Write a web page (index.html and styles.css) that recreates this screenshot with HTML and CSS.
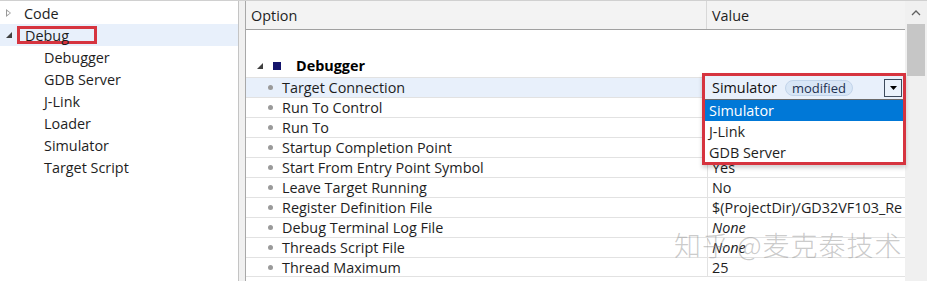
FILE: index.html
```html
<!DOCTYPE html>
<html lang="en">
<head>
<meta charset="utf-8">
<title>Options</title>
<link rel="stylesheet" href="styles.css">
</head>
<body>
<div class="app">
  <div class="tree">
    <div class="node"><span class="tw closed"></span><span class="lbl">Code</span></div>
    <div class="node sel"><span class="tw open"></span><span class="lbl mark">Debug</span></div>
    <div class="node child">Debugger</div>
    <div class="node child">GDB Server</div>
    <div class="node child">J-Link</div>
    <div class="node child">Loader</div>
    <div class="node child">Simulator</div>
    <div class="node child">Target Script</div>
  </div>
  <div class="splitter"></div>
  <div class="props">
    <div class="grid">
      <div class="hdr">
        <div class="hc opt">Option</div>
        <div class="hc val">Value</div>
      </div>
      <div class="body">
        <div class="cat"><span class="tw open dark"></span><span class="sq"></span><span class="cat-lbl">Debugger</span></div>
        <div class="row sel"><div class="c opt"><span class="dot"></span>Target Connection</div><div class="c val"></div></div>
        <div class="row"><div class="c opt"><span class="dot"></span>Run To Control</div><div class="c val"></div></div>
        <div class="row"><div class="c opt"><span class="dot"></span>Run To</div><div class="c val"></div></div>
        <div class="row"><div class="c opt"><span class="dot"></span>Startup Completion Point</div><div class="c val"></div></div>
        <div class="row"><div class="c opt"><span class="dot"></span>Start From Entry Point Symbol</div><div class="c val">Yes</div></div>
        <div class="row"><div class="c opt"><span class="dot"></span>Leave Target Running</div><div class="c val">No</div></div>
        <div class="row"><div class="c opt"><span class="dot"></span>Register Definition File</div><div class="c val">$(ProjectDir)/GD32VF103_Re</div></div>
        <div class="row"><div class="c opt"><span class="dot"></span>Debug Terminal Log File</div><div class="c val"><em>None</em></div></div>
        <div class="row"><div class="c opt"><span class="dot"></span>Threads Script File</div><div class="c val"><em>None</em></div></div>
        <div class="row"><div class="c opt"><span class="dot"></span>Thread Maximum</div><div class="c val">25</div></div>
      </div>
    </div>
    <div class="vscroll">
      <div class="arrow"><svg width="10" height="6" viewBox="0 0 10 6"><path d="M1 5 L5 1 L9 5" fill="none" stroke="#606060" stroke-width="1.3"/></svg></div>
      <div class="thumb"></div>
    </div>
    <div class="combo-pop">
      <div class="combo">
        <span class="combo-val">Simulator</span><span class="badge">modified</span>
        <span class="drop"><svg width="7" height="4" viewBox="0 0 7 4"><path d="M0 0 H7 L3.5 4 Z" fill="#000"/></svg></span>
      </div>
      <div class="list">
        <div class="item on">Simulator</div>
        <div class="item">J-Link</div>
        <div class="item">GDB Server</div>
      </div>
    </div>
    <div class="watermark">知乎 @麦克泰技术</div>
  </div>
</div>
</body>
</html>
```
FILE: styles.css
```css
* { box-sizing: border-box; }
html, body { margin: 0; padding: 0; }
body {
  width: 927px;
  height: 281px;
  overflow: hidden;
  background: #ffffff;
  font-family: "Open Sans", "Noto Sans", sans-serif;
  font-size: 14.4px;
  color: #1e1e1e;
}
.app {
  display: flex;
  height: 281px;
  border-top: 1px solid #d0d0d0;
}
.tree {
  width: 239px;
  flex: none;
  border-right: 1px solid #c4c4c4;
  padding-top: 1px;
  background: #fff;
}
.node {
  height: 22px;
  display: flex;
  align-items: center;
  padding-left: 5px;
  white-space: nowrap;
}
.node.sel { background: #e8f0fb; }
.node.child { padding-left: 44px; }
.tw { width: 8px; height: 8px; flex: none; display: inline-block; position: relative; }
.tw.closed::before {
  content: ""; position: absolute; left: 1px; top: 0;
  border-left: 5px solid #9a9a9a; border-top: 4px solid transparent; border-bottom: 4px solid transparent;
}
.tw.closed::after {
  content: ""; position: absolute; left: 2px; top: 2px;
  border-left: 3px solid #fff; border-top: 2px solid transparent; border-bottom: 2px solid transparent;
}
.tw.open::before {
  content: ""; position: absolute; left: 1px; top: 1px;
  border-bottom: 6px solid #404040; border-left: 6px solid transparent;
}
.lbl { margin-left: 11px; }
.lbl.mark {
  margin-left: 4px;
  width: 80px;
  height: 18px;
  border: 3px solid #d6343f;
  padding-left: 5px;
  line-height: 13px;
}
.splitter {
  width: 7px;
  flex: none;
  background: #f0f0f0;
  border-right: 1px solid #a8a8a8;
}
.props {
  flex: 1;
  display: flex;
  position: relative;
  background: #fff;
}
.grid { flex: 1; display: flex; flex-direction: column; min-width: 0; }
.hdr {
  height: 29px;
  display: flex;
  background: #f3f3f3;
  border-bottom: 1px solid #a0a0a0;
}
.hc { display: flex; align-items: center; padding-left: 5px; padding-top: 1px; }
.hc.opt { width: 461px; border-right: 1px solid #d8d8d8; }
.hc.val { flex: 1; }
.body { padding-top: 24px; }
.cat {
  height: 23px;
  display: flex;
  align-items: center;
  padding-left: 10px;
}
.tw.dark::before { border-bottom-color: #404040; }
.sq { width: 8px; height: 8px; background: #14146b; margin-left: 9px; }
.cat-lbl { font-weight: 700; margin-left: 15px; color: #000; }
.row {
  height: 20px;
  display: flex;
  border-top: 1px solid #e2e2e2;
}
.row:last-child { border-bottom: 1px solid #e2e2e2; }
.row.sel { background: #e8f0fb; }
.c { display: flex; align-items: center; white-space: nowrap; overflow: hidden; }
.c.opt { width: 462px; padding-left: 22px; border-right: 1px solid #e2e2e2; flex: none; }
.c.val { flex: 1; padding-left: 4px; min-width: 0; }
.dot { width: 5px; height: 5px; border-radius: 50%; background: #9a9a9a; margin-right: 9px; flex: none; }
em { font-style: italic; }
.vscroll {
  width: 22px;
  flex: none;
  background: #f0f0f0;
  display: flex;
  flex-direction: column;
  align-items: center;
}
.arrow { height: 23px; display: flex; align-items: center; justify-content: center; }
.thumb { width: 18px; height: 52px; background: #c6c6c6; }
.combo-pop {
  position: absolute;
  left: 456px;
  top: 72px;
  width: 204px;
  height: 92px;
  border: 3px solid #d6343f;
  background: #fff;
  box-shadow: 0 3px 4px rgba(0,0,0,0.18);
}
.combo {
  height: 23px;
  display: flex;
  align-items: center;
  background: #e8f0fb;
  padding-left: 7px;
  position: relative;
}
.combo-val { color: #111; }
.badge {
  margin-left: 8px;
  padding: 0 6px;
  height: 16px;
  line-height: 15px;
  font-size: 13px;
  border-radius: 8px;
  background: #d8e6f6;
  border: 1px solid #c2d4ea;
  color: #1c2f4f;
}
.drop {
  position: absolute;
  right: 1px;
  top: 3px;
  width: 18px;
  height: 18px;
  border: 1px solid #3c4a5c;
  background: #eaf2fb;
  display: flex;
  align-items: center;
  justify-content: center;
}
.list { border-top: 1px solid #6a6a6a; }
.item { height: 21px; display: flex; align-items: center; padding-left: 4px; }
.item.on { background: #0078d7; color: #fff; }
.watermark {
  position: absolute;
  left: 428px;
  top: 224px;
  font-family: "Noto Sans CJK SC", sans-serif;
  font-weight: 300;
  font-size: 27px;
  color: rgba(140,140,140,0.45);
  white-space: nowrap;
  letter-spacing: 1px;
}
```
